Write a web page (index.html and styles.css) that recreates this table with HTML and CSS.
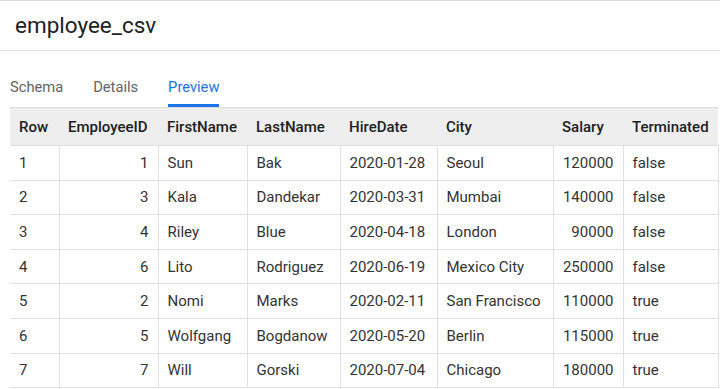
FILE: index.html
```html
<!DOCTYPE html>
<html>
<head>
<meta charset="utf-8">
<link rel="stylesheet" href="styles.css">
</head>
<body>
<div class="title">employee_csv</div>
<div class="tabs">
  <span class="tab">Schema</span>
  <span class="tab">Details</span>
  <span class="tab active">Preview</span>
</div>
<table class="grid">
  <colgroup>
    <col style="width:49px"><col style="width:99px"><col style="width:89px"><col style="width:93px"><col style="width:97px"><col style="width:116px"><col style="width:70px"><col style="width:95px">
  </colgroup>
  <thead>
    <tr><th>Row</th><th>EmployeeID</th><th>FirstName</th><th>LastName</th><th>HireDate</th><th>City</th><th>Salary</th><th>Terminated</th></tr>
  </thead>
  <tbody>
    <tr><td>1</td><td class="num">1</td><td>Sun</td><td>Bak</td><td>2020-01-28</td><td>Seoul</td><td class="num">120000</td><td>false</td></tr>
    <tr><td>2</td><td class="num">3</td><td>Kala</td><td>Dandekar</td><td>2020-03-31</td><td>Mumbai</td><td class="num">140000</td><td>false</td></tr>
    <tr><td>3</td><td class="num">4</td><td>Riley</td><td>Blue</td><td>2020-04-18</td><td>London</td><td class="num">90000</td><td>false</td></tr>
    <tr><td>4</td><td class="num">6</td><td>Lito</td><td>Rodriguez</td><td>2020-06-19</td><td>Mexico City</td><td class="num">250000</td><td>false</td></tr>
    <tr><td>5</td><td class="num">2</td><td>Nomi</td><td>Marks</td><td>2020-02-11</td><td>San Francisco</td><td class="num">110000</td><td>true</td></tr>
    <tr><td>6</td><td class="num">5</td><td>Wolfgang</td><td>Bogdanow</td><td>2020-05-20</td><td>Berlin</td><td class="num">115000</td><td>true</td></tr>
    <tr><td>7</td><td class="num">7</td><td>Will</td><td>Gorski</td><td>2020-07-04</td><td>Chicago</td><td class="num">180000</td><td>true</td></tr>
  </tbody>
</table>
</body>
</html>
```
FILE: styles.css
```css
html, body {
  margin: 0;
  padding: 0;
  background: #fff;
  font-family: Roboto, "Liberation Sans", sans-serif;
  color: #202124;
  overflow: hidden;
}
.title {
  border-top: 1px solid #dadce0;
  border-bottom: 1px solid #dadce0;
  height: 51px;
  box-sizing: border-box;
  padding-left: 15px;
  font-size: 22.5px;
  line-height: 49px;
  color: #202124;
}
.tabs {
  display: flex;
  gap: 30px;
  padding-left: 10px;
  margin-top: 23px;
  height: 33px;
  box-sizing: border-box;
}
.tab {
  font-size: 14.7px;
  color: #5f6368;
  line-height: 26px;
  height: 33px;
  box-sizing: border-box;
}
.tab.active {
  color: #1a73e8;
  border-bottom: 3px solid #1a73e8;
}
.grid {
  margin-left: 10px;
  width: 708px;
  table-layout: fixed;
  border-collapse: collapse;
  font-size: 15px;
}
.grid th {
  background: #eeeeee;
  border-top: 1px solid #dadce0;
  font-weight: 500;
  text-align: left;
  height: 38px;
  padding: 0 9px;
  box-sizing: border-box;
  color: #202124;
  white-space: nowrap;
}
.grid td {
  height: 34.6px;
  padding: 0 9px;
  box-sizing: border-box;
  border: 1px solid #e0e0e0;
  color: #333;
  white-space: nowrap;
}
.grid td:first-child {
  border-left: none;
}
.grid td.num {
  text-align: right;
}
```
